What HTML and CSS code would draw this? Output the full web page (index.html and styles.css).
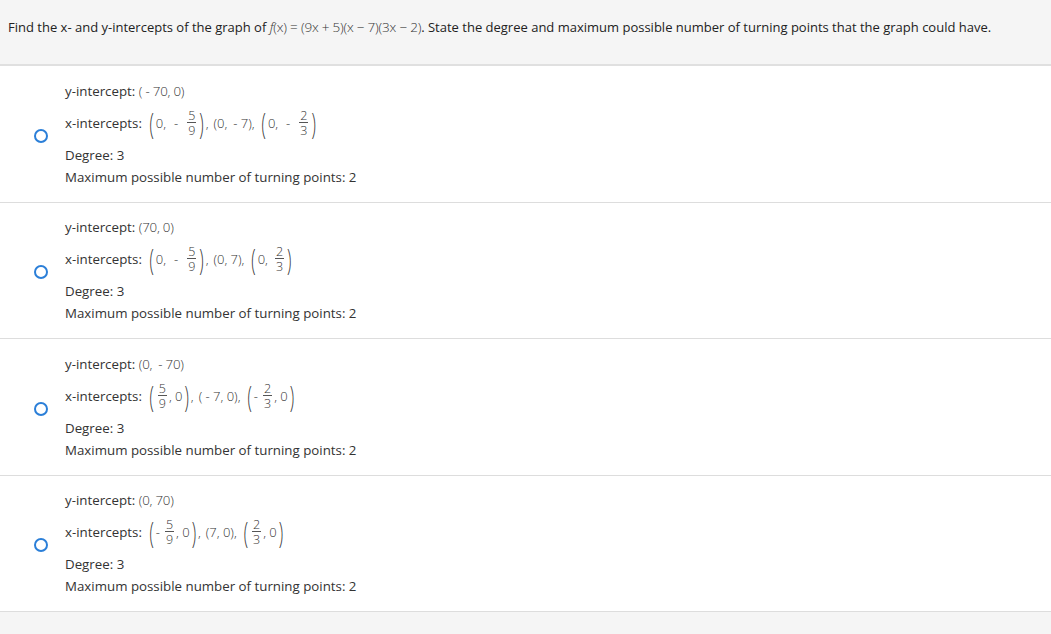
FILE: index.html
```html
<!DOCTYPE html>
<html>
<head>
<meta charset="utf-8">
<link rel="stylesheet" href="styles.css">
</head>
<body>
<div class="question">
  Find the x- and y-intercepts of the graph of <span class="m"><i class="fn">f</i>(x) = (9x + 5)(x − 7)(3x − 2)</span>. State the degree and maximum possible number of turning points that the graph could have.
</div>
<ul class="options">
  <li class="option">
    <span class="radio"></span>
    <div class="content">
      <div class="line">y-intercept: <span class="m">( - 70, 0)</span></div>
      <div class="line xline">x-intercepts: <span class="m"><span class="bp">(</span>0,<span class="sp"></span>-<span class="frac"><span>5</span><span class="den">9</span></span><span class="bp">)</span>,<span class="sp3"></span>(0,<span class="sp2"></span>- 7),<span class="sp3"></span><span class="bp">(</span>0,<span class="sp"></span>-<span class="frac"><span>2</span><span class="den">3</span></span><span class="bp">)</span></span></div>
      <div class="line">Degree: 3</div>
      <div class="line">Maximum possible number of turning points: 2</div>
    </div>
  </li>
  <li class="option">
    <span class="radio"></span>
    <div class="content">
      <div class="line">y-intercept: <span class="m">(70, 0)</span></div>
      <div class="line xline">x-intercepts: <span class="m"><span class="bp">(</span>0,<span class="sp"></span>-<span class="frac"><span>5</span><span class="den">9</span></span><span class="bp">)</span>,<span class="sp3"></span>(0, 7),<span class="sp3"></span><span class="bp">(</span>0,<span class="frac fs"><span>2</span><span class="den">3</span></span><span class="bp">)</span></span></div>
      <div class="line">Degree: 3</div>
      <div class="line">Maximum possible number of turning points: 2</div>
    </div>
  </li>
  <li class="option">
    <span class="radio"></span>
    <div class="content">
      <div class="line">y-intercept: <span class="m">(0,<span class="sp2"></span>- 70)</span></div>
      <div class="line xline">x-intercepts: <span class="m"><span class="bp">(</span><span class="frac ff"><span>5</span><span class="den">9</span></span>, 0<span class="bp">)</span>,<span class="sp3"></span>( - 7, 0),<span class="sp3"></span><span class="bp">(</span>-<span class="frac fm"><span>2</span><span class="den">3</span></span>, 0<span class="bp">)</span></span></div>
      <div class="line">Degree: 3</div>
      <div class="line">Maximum possible number of turning points: 2</div>
    </div>
  </li>
  <li class="option">
    <span class="radio"></span>
    <div class="content">
      <div class="line">y-intercept: <span class="m">(0, 70)</span></div>
      <div class="line xline">x-intercepts: <span class="m"><span class="bp">(</span>-<span class="frac fm"><span>5</span><span class="den">9</span></span>, 0<span class="bp">)</span>,<span class="sp3"></span>(7, 0),<span class="sp3"></span><span class="bp">(</span><span class="frac ff"><span>2</span><span class="den">3</span></span>, 0<span class="bp">)</span></span></div>
      <div class="line">Degree: 3</div>
      <div class="line">Maximum possible number of turning points: 2</div>
    </div>
  </li>
</ul>
</body>
</html>
```

FILE: styles.css
```css
html, body {
  margin: 0;
  padding: 0;
  background: #f5f5f5;
}
body {
  font-family: "Open Sans", "Lato", sans-serif;
  font-size: 13.3px;
  color: #222;
}
.question {
  height: 66px;
  box-sizing: border-box;
  padding: 19px 8px 0 8px;
  border-bottom: 2px solid #e0e0e0;
  font-size: 13px;
  line-height: 16px;
}
.m {
  font-family: "Open Sans", sans-serif;
  font-weight: 300;
  color: #333;
  letter-spacing: -0.2px;
}
.question .m {
  font-size: 13.5px;
}
.fn {
  font-style: italic;
}
.options {
  list-style: none;
  margin: 0;
  padding: 0;
  background: #fff;
}
.option {
  display: flex;
  align-items: center;
  padding: 14px 0;
  height: 136.5px;
  box-sizing: border-box;
  border-bottom: 1px solid #dddddd;
}
.radio {
  width: 10px;
  height: 10px;
  border: 2px solid #2b7fd8;
  border-radius: 50%;
  margin: 4px 17px 0 34px;
  flex: none;
}
.content {
  color: #333;
}
.line {
  height: 22px;
  line-height: 22px;
}
.xline {
  height: 42px;
  display: flex;
  align-items: center;
  white-space: pre;
}
.xline .m {
  display: inline-flex;
  align-items: center;
  margin-left: 2px;
  font-size: 13px;
  letter-spacing: 0;
  white-space: pre;
}
.bp {
  display: inline-block;
  font-size: 16px;
  transform: scale(1, 1.8);
  margin: 0 2px;
}
.sp {
  display: inline-block;
  width: 8px;
}
.sp2 {
  display: inline-block;
  width: 6px;
}
.sp3 {
  display: inline-block;
  width: 5px;
}
.frac {
  display: inline-flex;
  flex-direction: column;
  align-items: center;
  font-size: 12.5px;
  line-height: 13px;
  margin: 0 1px 0 9px;
}
.frac.fs {
  margin-left: 7px;
}
.frac.ff {
  margin-left: 2px;
  margin-right: 2px;
}
.frac.fm {
  margin-left: 5px;
  margin-right: 2px;
}
.den {
  border-top: 1px solid #555;
  padding: 1px 1px 0;
}
```
